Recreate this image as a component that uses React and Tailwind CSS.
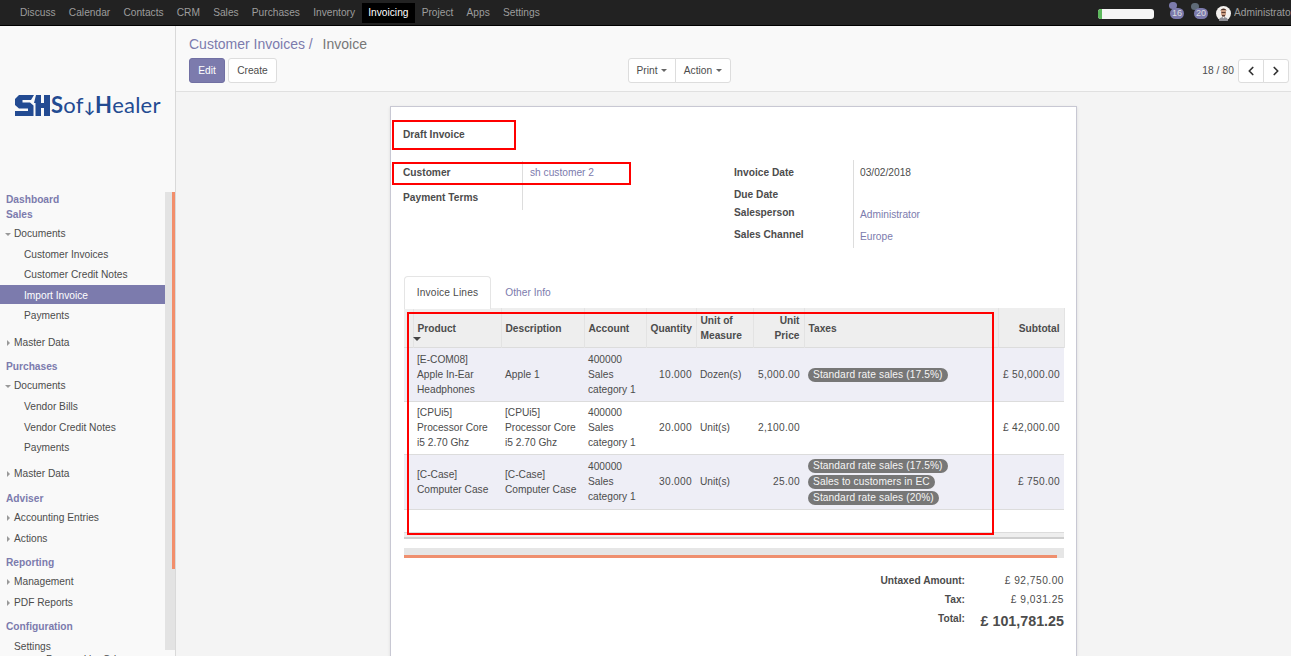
import { ChevronLeft, ChevronRight } from "lucide-react";

const navItems = ["Discuss", "Calendar", "Contacts", "CRM", "Sales", "Purchases", "Inventory", "Invoicing", "Project", "Apps", "Settings"];

const sideRows = [
  { label: "Dashboard", kind: "head", cls: "h-[14px]" },
  { label: "Sales", kind: "head", cls: "h-[16px]" },
  { label: "Documents", kind: "open", cls: "h-[22px]" },
  { label: "Customer Invoices", kind: "leaf", cls: "h-[20px]" },
  { label: "Customer Credit Notes", kind: "leaf", cls: "h-[20px]" },
  { label: "Import Invoice", kind: "active", cls: "h-[19px] mt-px" },
  { label: "Payments", kind: "leaf", cls: "h-[22px]" },
  { label: "Master Data", kind: "closed", cls: "h-[32px]" },
  { label: "Purchases", kind: "head", cls: "h-[16px]" },
  { label: "Documents", kind: "open", cls: "h-[22px]" },
  { label: "Vendor Bills", kind: "leaf", cls: "h-[20px]" },
  { label: "Vendor Credit Notes", kind: "leaf", cls: "h-[22px]" },
  { label: "Payments", kind: "leaf", cls: "h-[18px]" },
  { label: "Master Data", kind: "closed", cls: "h-[34px]" },
  { label: "Adviser", kind: "head", cls: "h-[16px]" },
  { label: "Accounting Entries", kind: "closed", cls: "h-[22px]" },
  { label: "Actions", kind: "closed", cls: "h-[20px]" },
  { label: "Reporting", kind: "head", cls: "h-[16px] mt-[6px]" },
  { label: "Management", kind: "closed", cls: "h-[22px]" },
  { label: "PDF Reports", kind: "closed", cls: "h-[20px]" },
  { label: "Configuration", kind: "head", cls: "h-[16px] mt-[6px]" },
  { label: "Settings", kind: "plain", cls: "h-[24px]" },
];

function SideRow({ row }) {
  if (row.kind === "head") {
    return <div className={`${row.cls} flex items-center pt-[2px] pl-[6px] font-bold text-[#7c7bad]`}>{row.label}</div>;
  }
  if (row.kind === "active") {
    return <div className={`${row.cls} flex items-center pt-[2px] pl-[24px] bg-[#7c7bad] text-white`}>{row.label}</div>;
  }
  if (row.kind === "leaf") {
    return <div className={`${row.cls} flex items-center pt-[2px] pl-[24px] text-[#4c4c4c]`}>{row.label}</div>;
  }
  return (
    <div className={`${row.cls} flex items-center pt-[2px] text-[#4c4c4c]`}>
      <span className="w-[14px] flex justify-center pl-[2px]">
        {row.kind === "open" && <span className="border-x-[3px] border-t-[3px] border-x-transparent border-t-[#999]" />}
        {row.kind === "closed" && <span className="border-y-[3px] border-l-[3px] border-y-transparent border-l-[#999]" />}
      </span>
      {row.label}
    </div>
  );
}

function Logo() {
  return (
    <div className="flex items-center pl-[15px] h-[22px]">
      <svg width="35" height="21" viewBox="0 0 35 21" className="shrink-0">
        <path fill="#234b92" d="M4 0H19L16 5H7.500V7.500H15L18.500 10.500V21H0V16H13V13.500H4L0 10V4Z" />
        <path fill="#234b92" d="M21 0H26V8H29V0H35V21H29V13H26V21H20.500V8H19Z" />
      </svg>
      <span className="text-[22px] leading-none text-[#234b92] tracking-[0.2px] ml-px font-['Lato',sans-serif]">
        <span className="font-bold">S</span>of
        <span className="font-bold text-[15px]">↓</span>
        <span className="font-bold">H</span>ealer
      </span>
    </div>
  );
}

function Sidebar() {
  return (
    <aside className="relative w-[176px] shrink-0 border-r border-[#d9d9d9] bg-[#f9f9f9] overflow-hidden">
      <div className="pt-[68px]">
        <Logo />
      </div>
      <div className="flex mt-[76px] h-[464px]">
        <nav className="w-[165px] shrink-0">
          {sideRows.map((row, i) => (
            <SideRow key={i} row={row} />
          ))}
        </nav>
        <div className="w-[10px] h-[458px] bg-[#e3e3e3] flex justify-end">
          <div className="w-[3px] h-[377px] bg-[#f28e6b]" />
        </div>
      </div>
      <div className="absolute left-[46px] top-[626px] text-[#4c4c4c]">Powered by Odoo</div>
    </aside>
  );
}

function Badge({ children }) {
  return (
    <span className="inline-flex items-center justify-center rounded-full bg-[#7c7bad] text-[#ddd] text-[9px] leading-none h-[11px] w-[14px]">
      {children}
    </span>
  );
}

function TopBar() {
  return (
    <header className="h-[26px] shrink-0 bg-[#222] border-b border-black flex items-center text-[#9d9d9d] overflow-hidden">
      <nav className="flex items-center pl-[13.400px]">
        {navItems.map((item) => (
          <span
            key={item}
            className={item === "Invoicing" ? "h-[20px] flex items-center px-[6.600px] bg-black text-white" : "h-[20px] flex items-center px-[6.600px]"}
          >
            {item}
          </span>
        ))}
      </nav>
      <div className="ml-auto flex items-center">
        <div className="mt-[2px] w-[56px] h-[10px] rounded-[3px] bg-[#f5f5f5] overflow-hidden">
          <div className="w-[4px] h-full bg-[#5cb85c]" />
        </div>
        <span className="ml-[16px] relative flex">
          <span className="absolute -left-[1px] -top-[3px] w-[8px] h-[7px] rounded-full bg-[#7c7bad]" />
          <span className="relative"><Badge>16</Badge></span>
        </span>
        <span className="ml-[10px] relative flex">
          <span className="absolute -left-[3px] -top-[2px] w-[8px] h-[7px] rounded-full bg-[#5f6b78]" />
          <span className="relative"><Badge>20</Badge></span>
        </span>
        <svg width="15" height="15" viewBox="0 0 15 15" className="ml-[8px] mt-px shrink-0">
          <circle cx="7.500" cy="7.500" r="7.500" fill="#f4f1ee" />
          <path fill="#c89a80" d="M5 4.500C5 2.500 10 2.500 10 4.500V7.500C10 9.500 9 10.500 7.500 10.500S5 9.500 5 7.500Z" />
          <path fill="#4a2f25" d="M4.500 5C4.500 1.500 10.500 1.500 10.500 5L9.500 4H5.500Z" />
          <path fill="#5a3b30" d="M5.500 6H9.500V7H5.500ZM6 9H9V10.500H6Z" />
          <path fill="#8f8f96" d="M3 15C3 12 5 11.500 6.500 11L7.500 12.500L8.500 11C10 11.500 12 12 12 15Z" />
        </svg>
        <span className="ml-[3px] w-[57px] whitespace-nowrap overflow-hidden">Administrator</span>
      </div>
    </header>
  );
}

function Caret() {
  return <span className="inline-block ml-[4px] align-middle border-x-[3px] border-t-[3px] border-x-transparent border-t-[#666]" />;
}

function ControlPanel() {
  return (
    <div className="h-[66px] shrink-0 bg-[#f9f9f9] border-b border-[#e0e0e0] pl-[13px] pr-[2px]">
      <div className="h-[32px] pt-[8px] text-[14px] leading-[20px] text-[#777]">
        <span className="text-[#7c7bad]">Customer Invoices</span>
        <span className="text-[#7c7bad]"> / </span>
        <span className="ml-[6px]">Invoice</span>
      </div>
      <div className="flex items-center">
        <div className="w-[439px] flex gap-[3px]">
          <button className="h-[25px] w-[36px] rounded-[3px] bg-[#7c7bad] border border-[#7170a3] text-white">Edit</button>
          <button className="h-[25px] w-[49px] rounded-[3px] bg-white border border-[#ddd] text-[#4c4c4c]">Create</button>
        </div>
        <div className="flex">
          <button className="h-[25px] w-[48px] rounded-l-[3px] bg-white border border-[#ddd] text-[#4c4c4c]">
            Print<Caret />
          </button>
          <button className="-ml-px h-[25px] w-[56px] rounded-r-[3px] bg-white border border-[#ddd] text-[#4c4c4c]">
            Action<Caret />
          </button>
        </div>
        <div className="ml-auto flex items-center">
          <span className="mr-[4px] tracking-[0.1px] text-[#4c4c4c]">18 / 80</span>
          <button className="h-[24px] w-[26px] flex items-center justify-center rounded-l-[3px] bg-white border border-[#ddd] text-[#333]">
            <ChevronLeft size={14} strokeWidth={3} />
          </button>
          <button className="-ml-px h-[24px] w-[26px] flex items-center justify-center rounded-r-[3px] bg-white border border-[#ddd] text-[#333]">
            <ChevronRight size={14} strokeWidth={3} />
          </button>
        </div>
      </div>
    </div>
  );
}

function Tax({ children }) {
  return <span className="inline-block rounded-[7px] bg-[#777] text-[#f5f5f5] h-[14px] leading-[14px] px-[5px] tracking-[0.1px] whitespace-nowrap">{children}</span>;
}

function Cell({ children, right, className = "" }) {
  return <td className={`px-[4px] py-0 align-middle leading-[15px] ${right ? "text-right tracking-[0.3px] whitespace-nowrap" : ""} ${className}`}>{children}</td>;
}

function Lines({ items }) {
  return items.map((t, i) => <div key={i}>{t}</div>);
}

const invoiceRows = [
  {
    h: "h-[54px] bg-[#eeeef6]",
    product: ["[E-COM08]", "Apple In-Ear", "Headphones"],
    desc: ["Apple 1"],
    qty: "10.000",
    uom: "Dozen(s)",
    price: "5,000.00",
    taxes: ["Standard rate sales (17.5%)"],
    subtotal: "£ 50,000.00",
  },
  {
    h: "h-[53px] bg-white",
    product: ["[CPUi5]", "Processor Core", "i5 2.70 Ghz"],
    desc: ["[CPUi5]", "Processor Core", "i5 2.70 Ghz"],
    qty: "20.000",
    uom: "Unit(s)",
    price: "2,100.00",
    taxes: [],
    subtotal: "£ 42,000.00",
  },
  {
    h: "h-[55px] bg-[#eeeef6]",
    product: ["[C-Case]", "Computer Case"],
    desc: ["[C-Case]", "Computer Case"],
    qty: "30.000",
    uom: "Unit(s)",
    price: "25.00",
    taxes: ["Standard rate sales (17.5%)", "Sales to customers in EC", "Standard rate sales (20%)"],
    subtotal: "£ 750.00",
  },
];

function InvoiceTable() {
  const th = "border-x border-[#e3e3e3] px-[4px] pt-[2px] font-bold align-middle leading-[15px]";
  return (
    <table className="table-fixed w-[660px] border-collapse text-[#4c4c4c]">
      <colgroup>
        <col className="w-[9px]" />
        <col className="w-[88px]" />
        <col className="w-[83px]" />
        <col className="w-[62px]" />
        <col className="w-[50px]" />
        <col className="w-[57px]" />
        <col className="w-[51px]" />
        <col className="w-[194px]" />
        <col className="w-[66px]" />
      </colgroup>
      <thead>
        <tr className="h-[39px] bg-[#eeeeee] border-b border-[#dcdcdc]">
          <th className="" />
          <th className={`${th} text-left relative`}>
            Product
            <span className="absolute left-[-1px] bottom-[6px] border-x-[4px] border-t-[4px] border-x-transparent border-t-[#444]" />
          </th>
          <th className={`${th} text-left`}>Description</th>
          <th className={`${th} text-left`}>Account</th>
          <th className={`${th} text-left`}>Quantity</th>
          <th className={`${th} text-left`}>Unit of Measure</th>
          <th className={`${th} text-right`}>Unit Price</th>
          <th className={`${th} text-left`}>Taxes</th>
          <th className={`${th} text-right`}>Subtotal</th>
        </tr>
      </thead>
      <tbody>
        {invoiceRows.map((r) => (
          <tr key={r.subtotal} className={`${r.h} border-b border-[#dcdcdc]`}>
            <td />
            <Cell><Lines items={r.product} /></Cell>
            <Cell><Lines items={r.desc} /></Cell>
            <Cell><Lines items={["400000", "Sales", "category 1"]} /></Cell>
            <Cell right>{r.qty}</Cell>
            <Cell>{r.uom}</Cell>
            <Cell right>{r.price}</Cell>
            <Cell className="whitespace-nowrap">
              <div className="flex flex-col items-start gap-[2px] pt-px">
                {r.taxes.map((t) => <Tax key={t}>{t}</Tax>)}
              </div>
            </Cell>
            <Cell right>{r.subtotal}</Cell>
          </tr>
        ))}
        <tr className="h-[23px] bg-white border-b border-[#dcdcdc]"><td colSpan={9} /></tr>
        <tr className="h-[6px] bg-[#eeeeee] border-b-2 border-[#cfcfcf]"><td colSpan={9} /></tr>
      </tbody>
    </table>
  );
}

function Field({ label, value, link, className = "" }) {
  return (
    <div className={`flex ${className}`}>
      <div className="w-[119px] font-bold text-[#4c4c4c]">{label}</div>
      <div className={`self-stretch flex items-center border-l border-[#ddd] pl-[7px] flex-1 ${link ? "text-[#7c7bad]" : "text-[#4c4c4c]"}`}>{value}</div>
    </div>
  );
}

function Sheet() {
  return (
    <div className="relative w-[687px] h-[600px] bg-white border border-[#c8c8d3] shadow-[0_1px_3px_rgba(0,0,0,0.1)] pt-[21px] pl-[12px]">
      <div className="h-[14px] leading-[14px] font-bold text-[#4c4c4c]">Draft Invoice</div>
      <div className="flex mt-[19px]">
        <div className="w-[331px]">
          <Field label="Customer" value="sh customer 2" link className="h-[24px] items-center" />
          <Field label="Payment Terms" value="" className="h-[25px] items-center" />
        </div>
        <div className="w-[320px] -mt-px leading-[15px]">
          <div className="flex h-[25px] items-center"><b className="w-[119px] text-[#4c4c4c]">Invoice Date</b><span className="border-l border-[#ddd] pl-[6px] h-full flex items-center text-[#4c4c4c]">03/02/2018</span></div>
          <div className="flex h-[19px] items-center"><b className="w-[119px] text-[#4c4c4c]">Due Date</b><span className="border-l border-[#ddd] h-full" /></div>
          <div className="flex h-[21px] items-center"><b className="w-[119px] text-[#4c4c4c] -mt-[4px]">Salesperson</b><span className="border-l border-[#ddd] pl-[6px] h-full flex items-center text-[#7c7bad]">Administrator</span></div>
          <div className="flex h-[23px] items-center"><b className="w-[119px] text-[#4c4c4c] -mt-[5px]">Sales Channel</b><span className="border-l border-[#ddd] pl-[6px] h-full flex items-center text-[#7c7bad]">Europe</span></div>
        </div>
      </div>
      <div className="flex mt-[28px] h-[33px] ml-px">
        <div className="w-[87px] h-[33px] flex items-center justify-center bg-white border border-[#e5e5e5] border-b-0 rounded-t-[4px] text-[#4c4c4c] tracking-[0.15px]">Invoice Lines</div>
        <div className="w-[74px] flex items-center justify-center text-[#7c7bad]">Other Info</div>
      </div>
      <div className="ml-px -mt-px"><InvoiceTable /></div>
      <div className="ml-px mt-[9px] w-[660px] h-[10px] bg-[#e6e6e6] flex flex-col justify-end">
        <div className="w-[653px] h-[3px] bg-[#ef8f6e]" />
      </div>
      <div className="ml-px mt-[13px] w-[660px] flex flex-col items-end text-[#4c4c4c]">
        <div className="flex h-[20px] items-center"><b className="mr-[15px]">Untaxed Amount:</b><span className="w-[84px] text-right tracking-[0.5px]">£ 92,750.00</span></div>
        <div className="flex h-[18px] items-center"><b className="mr-[15px]">Tax:</b><span className="w-[84px] text-right tracking-[0.5px]">£ 9,031.25</span></div>
        <div className="flex items-start mt-[2px]"><b className="mr-[15px]">Total:</b><b className="w-[84px] -mt-px text-right text-[14.300px] leading-[22px] whitespace-nowrap">£ 101,781.25</b></div>
      </div>
      {/* red annotation boxes from the screenshot */}
      <div className="absolute left-[1px] top-[13px] w-[124px] h-[30px] border-[2px] border-[#f00]" />
      <div className="absolute left-[1px] top-[55px] w-[239px] h-[23px] border-[2px] border-[#f00]" />
      <div className="absolute left-[16px] top-[205px] w-[587px] h-[223px] border-[2px] border-[#f00]" />
    </div>
  );
}

export default function App() {
  return (
    <div className="w-[1291px] h-[656px] overflow-hidden flex flex-col bg-white text-[10.200px] leading-[16px] font-['Liberation_Sans',sans-serif]">
      <TopBar />
      <div className="flex flex-1 min-h-0">
        <Sidebar />
        <main className="flex-1 min-w-0 flex flex-col">
          <ControlPanel />
          <div className="flex-1 min-h-0 overflow-hidden bg-[#f4f4f4] pl-[214px] pt-[14px]">
            <Sheet />
          </div>
        </main>
      </div>
    </div>
  );
}
